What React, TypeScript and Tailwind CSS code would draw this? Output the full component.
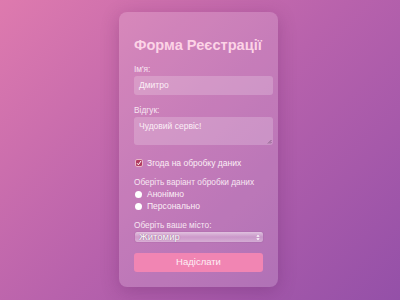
import React from "react";

export default function App() {
  return (
    <div
      className="w-[400px] h-[300px] flex justify-center items-start pt-[12px] bg-[linear-gradient(135deg,#de7aae_0%,#b862ac_50%,#9450a8_100%)]"
      style={{ fontFamily: '"Liberation Sans", Arial, sans-serif' }}
    >
      <div className="mr-[3px] w-[159px] h-[275px] rounded-[8px] bg-[rgba(255,255,255,0.16)] shadow-[0_4px_18px_rgba(80,20,80,0.25)] px-[15px] pt-[24px] pb-[15px] flex flex-col">
        <div className="text-[14.6px] leading-[18px] font-bold text-[#fcd3e6] whitespace-nowrap">
          Форма Реєстрації
        </div>
        <div className="mt-[10px] text-[8.3px] leading-[10px] text-[#f7e6f2]">Ім'я:</div>
        <div className="mt-[2px] w-[139px] h-[19px] rounded-[3px] bg-[rgba(255,255,255,0.2)] px-[5px] flex items-center text-[8.5px] text-[#fbeef6]">
          Дмитро
        </div>
        <div className="mt-[10px] text-[8.3px] leading-[10px] text-[#f7e6f2]">Відгук:</div>
        <div className="relative mt-[2px] w-[139px] h-[28px] rounded-[3px] bg-[rgba(255,255,255,0.2)] px-[5px] pt-[4px] text-[8.5px] leading-[10px] text-[#fbeef6]">
          Чудовий сервіс!
          <svg className="absolute right-[1px] bottom-[1px]" width="5" height="5" viewBox="0 0 5 5">
            <path d="M4.5 1 L1 4.5 M4.5 3 L3 4.5" stroke="#6a4a6a" strokeWidth="0.7" />
          </svg>
        </div>
        <div className="mt-[13px] h-[10px] flex items-center gap-[4px] text-[8.5px] text-[#fbeef6]">
          <span className="ml-[1px] w-[8px] h-[8px] rounded-[2px] bg-[#b23d62] border border-[#e9b6c8] flex items-center justify-center">
            <svg width="6" height="6" viewBox="0 0 6 6">
              <path d="M1 3.2 L2.4 4.8 L5 1" fill="none" stroke="white" strokeWidth="1" />
            </svg>
          </span>
          <span>Згода на обробку даних</span>
        </div>
        <div className="mt-[9px] text-[8.3px] leading-[10px] text-[#f7e6f2] whitespace-nowrap">
          Оберіть варіант обробки даних
        </div>
        <div className="mt-[2px] h-[10px] flex items-center gap-[5px] text-[8.5px] text-[#fbeef6]">
          <span className="w-[7px] h-[7px] rounded-full bg-white ml-[1px]" />
          <span>Анонімно</span>
        </div>
        <div className="mt-[2px] h-[10px] flex items-center gap-[5px] text-[8.5px] text-[#fbeef6]">
          <span className="w-[7px] h-[7px] rounded-full bg-white ml-[1px]" />
          <span>Персонально</span>
        </div>
        <div className="mt-[9px] text-[8.3px] leading-[10px] text-[#f7e6f2] whitespace-nowrap">
          Оберіть ваше місто:
        </div>
        <div className="mt-[2px] ml-[1px] w-[128px] h-[10px] rounded-[2px] bg-[linear-gradient(180deg,rgba(255,255,255,0.55)_0%,rgba(255,255,255,0.25)_50%,rgba(255,255,255,0.4)_100%)] shadow-[0_0_1px_rgba(90,40,90,0.6)] flex items-center justify-between pl-[4px] pr-[3px]">
          <span className="text-[9.5px] leading-[10px] text-white [text-shadow:0_0_1px_rgba(60,20,60,0.6)]">Житомир</span>
          <svg width="4" height="7" viewBox="0 0 4 7">
            <path d="M0.3 2.8 L2 0.8 L3.7 2.8 Z M0.3 4.2 L2 6.2 L3.7 4.2 Z" fill="white" />
          </svg>
        </div>
        <div className="mt-[11px] w-[129px] h-[19px] rounded-[3px] bg-[#f185b3] flex items-center justify-center text-[9.5px] text-[#fdf0f6]">
          Надіслати
        </div>
      </div>
    </div>
  );
}
